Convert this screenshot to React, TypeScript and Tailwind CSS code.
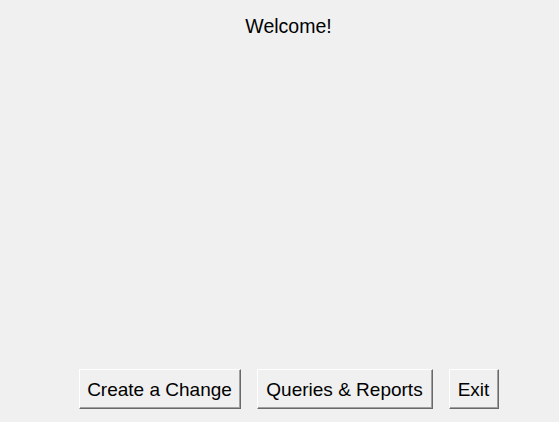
import React from "react";

const btn =
  "h-[40px] flex items-center justify-center bg-[#f0f0f0] border border-t-white border-l-white border-r-[#696969] border-b-[#696969] shadow-[inset_-1px_-1px_0_#a0a0a0] text-[19px] leading-[22px] text-black pt-[1px]";

export default function App() {
  return (
    <div
      className="w-[559px] h-[422px] bg-[#f0f0f0] flex flex-col pl-[18px]"
      style={{ fontFamily: '"Liberation Sans", Arial, sans-serif' }}
    >
      <div className="pt-[15px] text-center text-[19.5px] leading-[22px] text-black">
        Welcome!
      </div>
      <div className="mt-auto pb-[13px] flex justify-center gap-[16px]">
        <button className={`${btn} w-[162px]`}>Create a Change</button>
        <button className={`${btn} w-[176px]`}>Queries &amp; Reports</button>
        <button className={`${btn} w-[50px]`}>Exit</button>
      </div>
    </div>
  );
}
